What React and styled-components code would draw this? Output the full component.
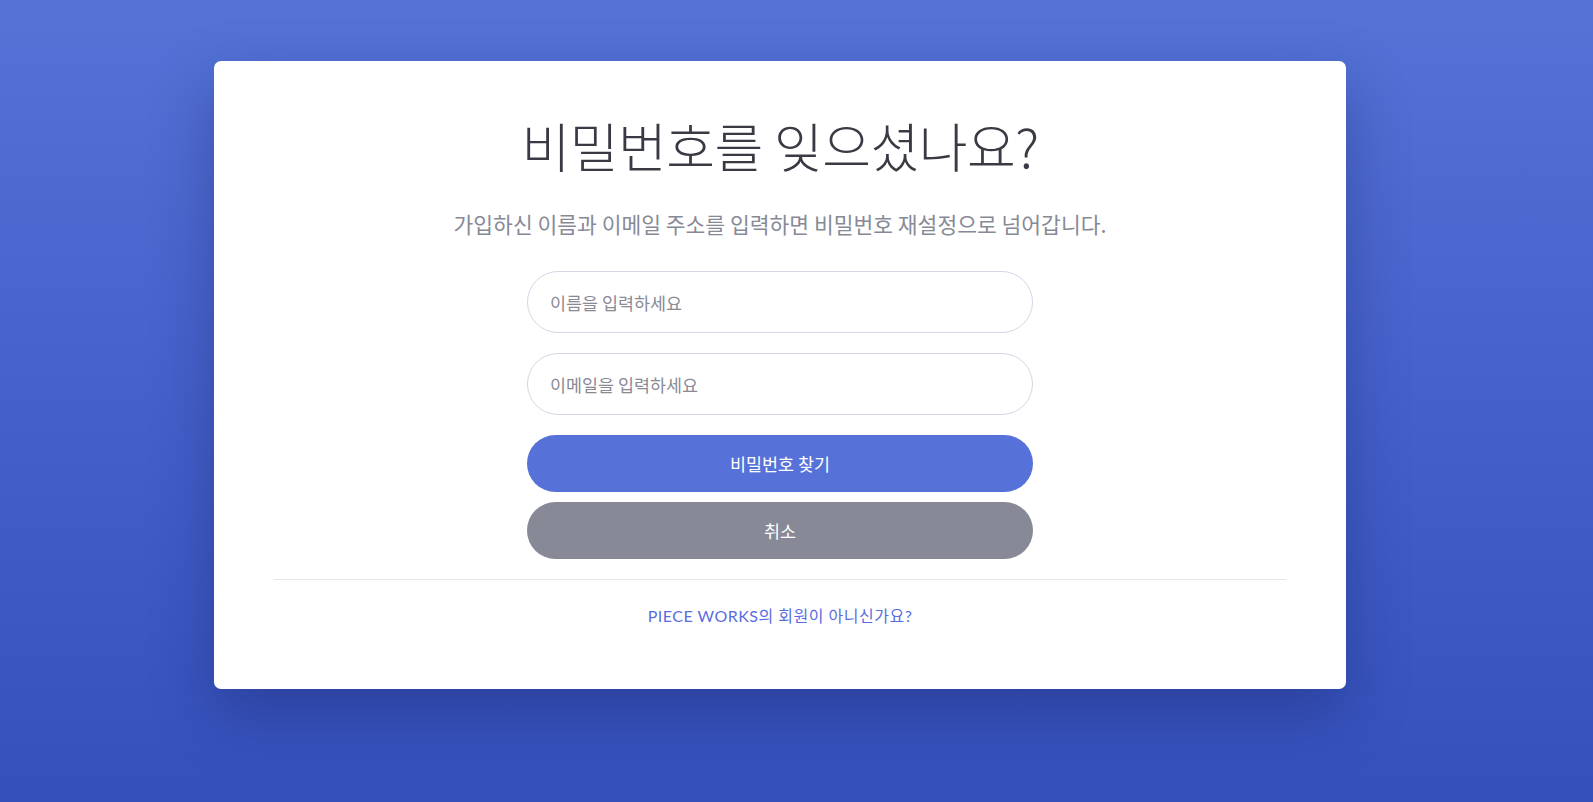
import React from 'react';
import styled, { createGlobalStyle } from 'styled-components';

const GlobalStyle = createGlobalStyle`
  * {
    box-sizing: border-box;
  }
  html, body {
    margin: 0;
    padding: 0;
  }
  body {
    font-family: 'Lato', 'Noto Sans CJK KR', sans-serif;
    background: linear-gradient(180deg, #5573d7 0%, #4460cb 50%, #3450bb 100%);
    min-height: 100vh;
  }
`;

const Page = styled.div`
  min-height: 100vh;
  padding: 61px 0 0 214px;
`;

const Card = styled.div`
  width: 1132px;
  height: 628px;
  background: #ffffff;
  border-radius: 7px;
  box-shadow: 0 24px 60px rgba(20, 30, 90, 0.35);
  padding: 52px 60px 0;
  display: flex;
  flex-direction: column;
  align-items: center;
`;

const Title = styled.h1`
  margin: 0;
  font-family: 'Noto Sans CJK KR', sans-serif;
  font-weight: 300;
  font-size: 53px;
  line-height: 64px;
  color: #3a3a44;
  letter-spacing: -0.5px;
`;

const Subtitle = styled.p`
  margin: 32px 0 0;
  font-family: 'Noto Sans CJK KR', sans-serif;
  font-weight: 400;
  font-size: 21.5px;
  line-height: 30px;
  color: #878a96;
`;

const Form = styled.form`
  width: 506px;
  margin-top: 32px;
  display: flex;
  flex-direction: column;
`;

const Input = styled.input`
  height: 62px;
  border: 1px solid #d6d6e6;
  border-radius: 31px;
  padding: 0 22px;
  font-family: 'Noto Sans CJK KR', sans-serif;
  font-size: 17.4px;
  color: #3a3a44;
  outline: none;
  margin-bottom: 20px;

  &::placeholder {
    color: #8a8a95;
  }
`;

const Button = styled.button`
  height: 57px;
  border: none;
  border-radius: 29px;
  background: ${({ $variant }) => ($variant === 'cancel' ? '#878a96' : '#5672d9')};
  color: #ffffff;
  font-family: 'Noto Sans CJK KR', sans-serif;
  font-size: 17.4px;
  font-weight: 400;
  cursor: pointer;
  margin-bottom: ${({ $variant }) => ($variant === 'cancel' ? '0' : '10px')};
`;

const Divider = styled.hr`
  align-self: stretch;
  border: none;
  border-top: 1px solid #e6e6ec;
  margin: 20px 0 0;
`;

const SignupLink = styled.a`
  margin-top: 25px;
  font-family: 'Lato', 'Noto Sans CJK KR', sans-serif;
  font-size: 16px;
  line-height: 22px;
  letter-spacing: 0.5px;
  color: #5a6de0;
  text-decoration: none;
  cursor: pointer;
`;

const App = () => {
  return (
    <>
      <GlobalStyle />
      <Page>
        <Card>
          <Title>비밀번호를 잊으셨나요?</Title>
          <Subtitle>가입하신 이름과 이메일 주소를 입력하면 비밀번호 재설정으로 넘어갑니다.</Subtitle>
          <Form onSubmit={(e) => e.preventDefault()}>
            <Input type='text' placeholder='이름을 입력하세요' />
            <Input type='email' placeholder='이메일을 입력하세요' />
            <Button type='submit'>비밀번호 찾기</Button>
            <Button type='button' $variant='cancel'>취소</Button>
          </Form>
          <Divider />
          <SignupLink href='#'>PIECE WORKS의 회원이 아니신가요?</SignupLink>
        </Card>
      </Page>
    </>
  );
};

export default App;
